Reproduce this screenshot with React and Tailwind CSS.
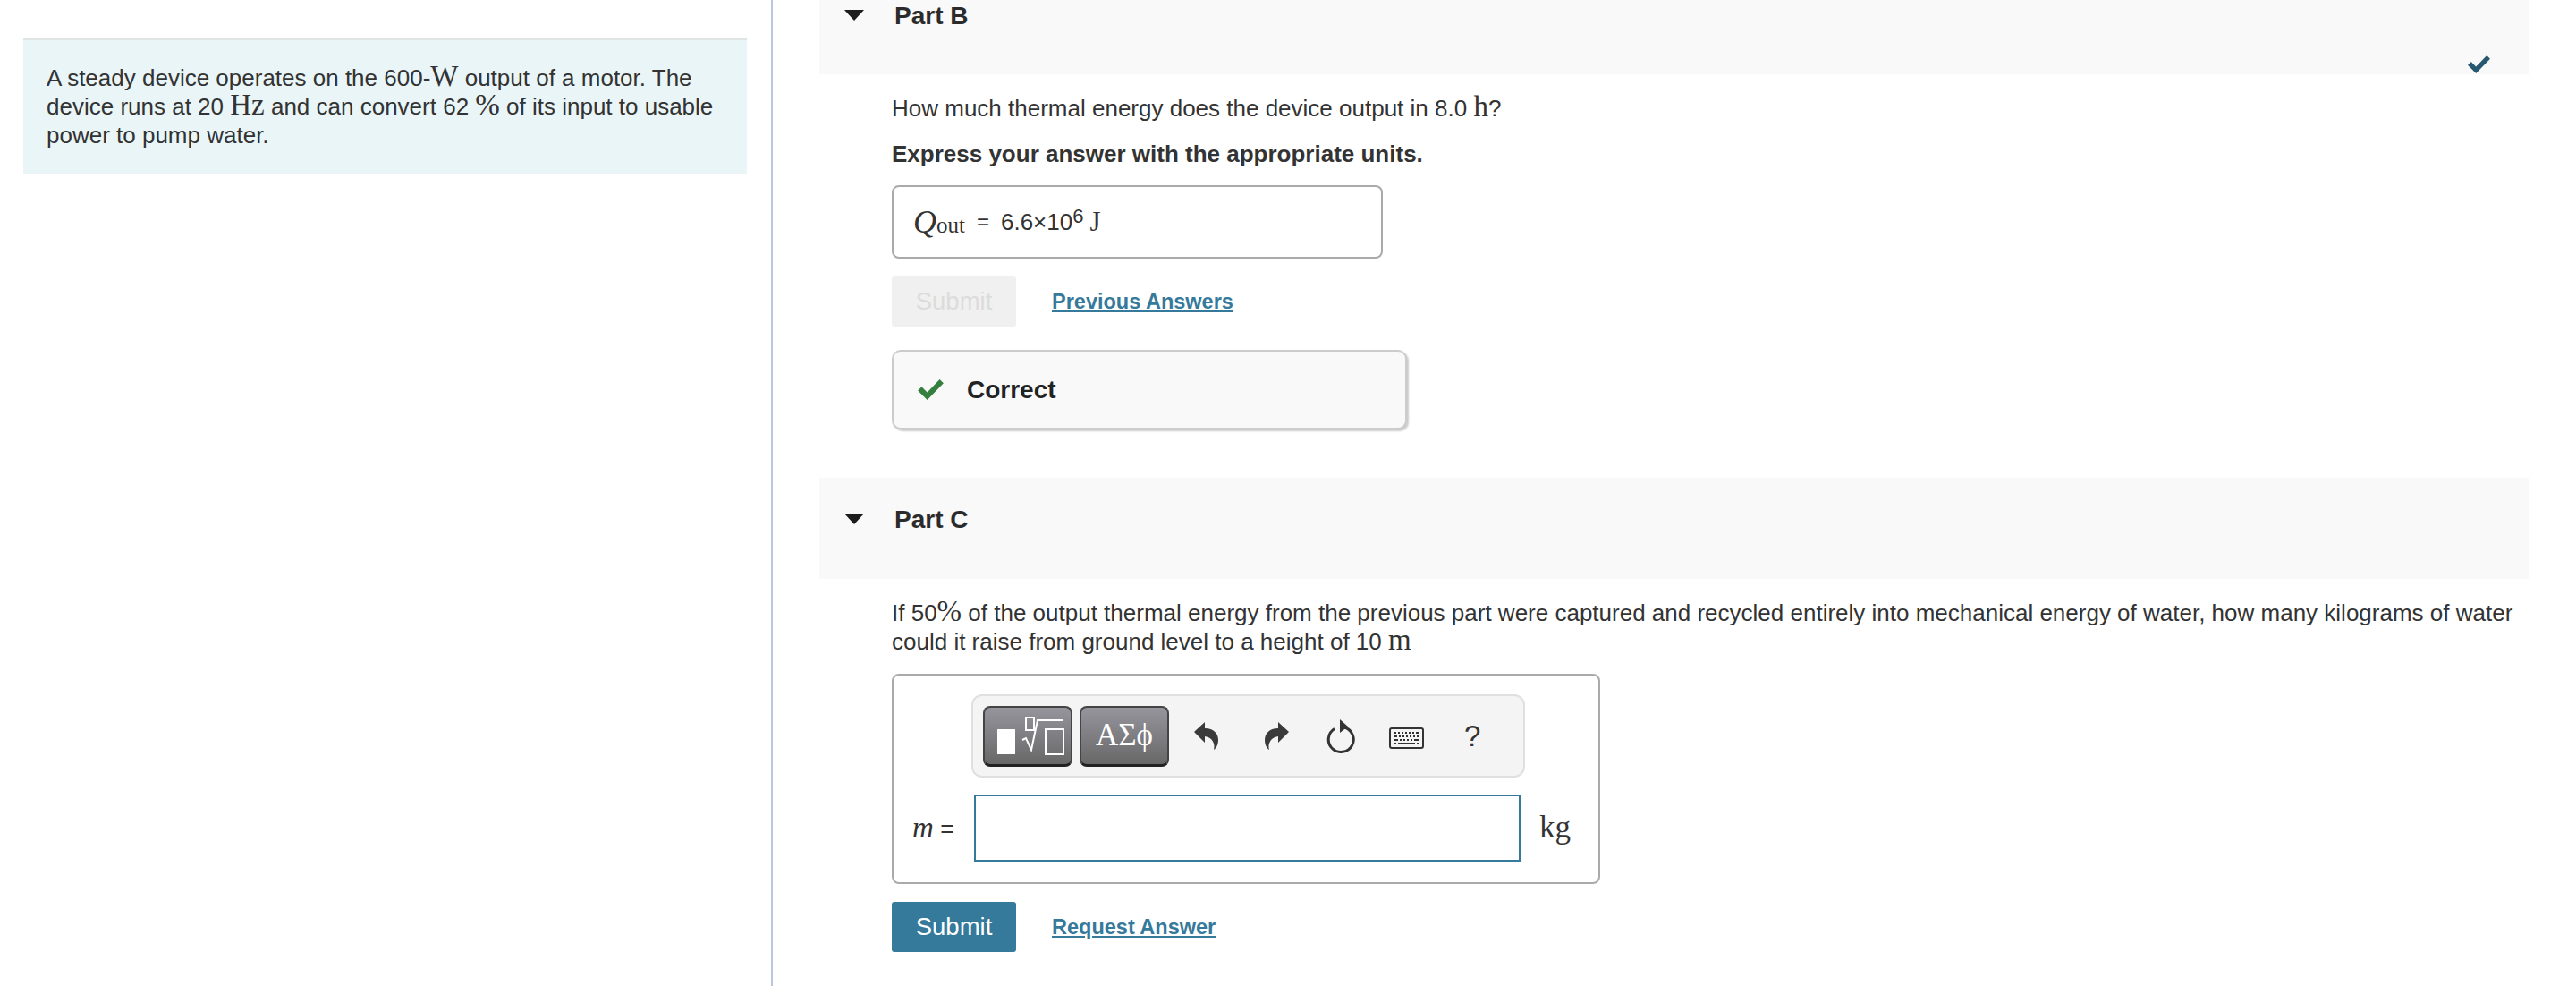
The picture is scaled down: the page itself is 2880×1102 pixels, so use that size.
// ─── Inline math in the serif face, a bit larger than the body text ───────────
const M = ({ children }) => (
  <span className="font-['Liberation_Serif',serif] text-[33px] leading-[0px]">{children}</span>
);

const CheckMark = ({ className }) => (
  <svg viewBox="0 0 30 24" className={className} fill="currentColor">
    <path d="M11 24 L0 13 L4.500 8.500 L11 15 L25.500 0 L30 4.500 Z" />
  </svg>
);

const Triangle = () => (
  <svg viewBox="0 0 22 12" className="w-[22px] h-[12px] shrink-0 text-[#1d1d1d]" fill="currentColor">
    <path d="M0 0 H22 L11 12 Z" />
  </svg>
);

const UndoIcon = ({ flip }) => (
  <svg viewBox="0 0 28 32" className={`w-[28px] h-[32px] text-[#3a3a3a] ${flip ? '-scale-x-100' : ''}`} fill="currentColor">
    <path d="M0 11 L12 0 V7 C22 7 27 13 27 20 C27 25 25 29 22 31 C24 24 20 17 12 16 V23 Z" />
  </svg>
);

const ResetIcon = () => (
  <svg viewBox="0 0 32 38" className="w-[32px] h-[38px] text-[#333]" fill="none" stroke="currentColor">
    <path d="M9 10.500 A14 14 0 1 0 20 9" strokeWidth="3" />
    <path d="M15 0 L24 8 L15 15 Z" fill="currentColor" stroke="none" />
  </svg>
);

const KeyboardIcon = () => (
  <svg viewBox="0 0 39 24" className="w-[39px] h-[24px] text-[#333]">
    <rect x="1" y="1" width="37" height="22" rx="2" fill="none" stroke="currentColor" strokeWidth="2" />
    <path
      d="M6 6 h2 M10 6 h2 M14 6 h2 M18 6 h2 M22 6 h2 M26 6 h2 M30 6 h3 M6 10 h3 M11 10 h2 M15 10 h2 M19 10 h2 M23 10 h2 M27 10 h2 M31 10 h2 M6 14 h4 M12 14 h2 M16 14 h2 M20 14 h2 M24 14 h2 M28 14 h5 M6 18 h2 M10 18 h19 M31 18 h2"
      stroke="currentColor"
      strokeWidth="2"
    />
  </svg>
);

const RadicalIcon = () => (
  <svg viewBox="0 0 96 63" className="w-[96px] h-[63px]" fill="none" stroke="#fff" strokeWidth="2">
    <rect x="14" y="24" width="20" height="28" fill="#fff" stroke="none" />
    <rect x="46" y="11" width="9" height="14" />
    <path d="M42 36 L46 34 L52 47 L59 14 H88" />
    <rect x="68" y="24" width="20" height="28" />
  </svg>
);

const PaletteButton = ({ children }) => (
  <div className="w-[100px] h-[68px] rounded-[8px] border-2 border-[#444] border-b-[3px] border-b-[#222] bg-gradient-to-b from-[#96959d] to-[#686868] flex items-center justify-center">
    {children}
  </div>
);

const PartHeader = ({ label, className }) => (
  <div className={`bg-[#f9f9f9] flex items-start pl-[28px] ${className}`}>
    <Triangle />
    <span className="ml-[34px] text-[28px] font-bold text-[#2b2b2b]">{label}</span>
  </div>
);

const LinkText = ({ children }) => (
  <a className="text-[23.500px] font-bold underline text-[#35799b]">{children}</a>
);

// ─── App ──────────────────────────────────────────────────────────────────────
export default function App() {
  return (
    <div className="h-screen overflow-hidden bg-white flex font-['Liberation_Sans',sans-serif] text-[26px] leading-[32px] text-[#333]">

      {/* Left column: problem statement */}
      <aside className="w-[864px] shrink-0 border-r-2 border-[#b9c9d9] pt-[43px] pl-[26px] pr-[27px]">
        <div className="bg-[#e9f5f7] border-t-2 border-[#dfe5e5] pt-[26px] pb-[27px] pl-[26px] pr-[24px]">
          A steady device operates on the 600-<M>W</M> output of a motor. The device runs at 20 <M>Hz</M> and can
          convert 62 <M>%</M> of its input to usable power to pump water.
        </div>
      </aside>

      {/* Right column: parts */}
      <main className="flex-1 pl-[52px] pr-[52px]">

        {/* Part B */}
        <PartHeader label="Part B" className="h-[83px] pt-[2px] [&>svg]:mt-[9px]" />
        <div className="relative pl-[81px]">
          <CheckMark className="absolute right-[44px] -top-[21px] w-[25px] h-[20px] text-[#26596f]" />
          <p className="pt-[22px]">How much thermal energy does the device output in 8.0 <M>h</M>?</p>
          <p className="mt-[19px] font-bold">Express your answer with the appropriate units.</p>
          <div className="mt-[19px] w-[549px] h-[82px] rounded-[8px] border-2 border-[#aaa] flex items-center pl-[22px] text-[24px]">
            <span className="font-['Liberation_Serif',serif] italic text-[36px]">Q</span>
            <span className="font-['Liberation_Serif',serif] text-[25px] mt-[8px]">out</span>
            <span className="ml-[13px]">=</span>
            <span className="ml-[13px] text-[26px]">6.6×10</span>
            <span className="text-[22px] -mt-[12px]">6</span>
            <span className="ml-[7px] font-['Liberation_Serif',serif] text-[31px]">J</span>
          </div>
          <div className="mt-[20px] flex items-center gap-[40px]">
            <div className="w-[139px] h-[56px] rounded-[3px] bg-[#f0f0f0] text-[27.500px] text-[#dcdcdc] flex items-center justify-center">Submit</div>
            <LinkText>Previous Answers</LinkText>
          </div>
          <div className="mt-[26px] w-[576px] h-[89px] rounded-[10px] border-2 border-[#ccc] bg-[#f9f9f9] shadow-[2px_2px_2px_#ccc] flex items-center pl-[27px]">
            <CheckMark className="w-[29px] h-[23px] text-[#35803f]" />
            <span className="ml-[26px] text-[28px] font-bold text-[#222]">Correct</span>
          </div>
        </div>

        {/* Part C */}
        <PartHeader label="Part C" className="mt-[54px] h-[113px] pt-[31px] [&>svg]:mt-[9px]" />
        <div className="pl-[81px]">
          <p className="pt-[22px]">
            If 50<M>%</M> of the output thermal energy from the previous part were captured and recycled entirely into
            mechanical energy of water, how many kilograms of water could it raise from ground level to a height of 10 <M>m</M>
          </p>
          <div className="mt-[20px] w-[792px] h-[235px] rounded-[8px] border-2 border-[#aaa] pl-[87px] pt-[21px]">
            <div className="w-[619px] h-[93px] rounded-[12px] border-2 border-[#e0e0e0] bg-[#f4f4f4] flex items-center pl-[11px]">
              <PaletteButton><RadicalIcon /></PaletteButton>
              <div className="ml-[8px]">
                <PaletteButton>
                  <span className="font-['Liberation_Serif',serif] text-[35px] text-white">ΑΣϕ</span>
                </PaletteButton>
              </div>
              <div className="ml-[28px]"><UndoIcon /></div>
              <div className="ml-[50px]"><UndoIcon flip /></div>
              <div className="ml-[42px]"><ResetIcon /></div>
              <div className="ml-[38px] mt-[4px]"><KeyboardIcon /></div>
              <span className="ml-[45px] text-[33px] text-[#333]">?</span>
            </div>
            <div className="relative mt-[19px] ml-[3px] w-[611px] h-[75px] border-2 border-[#35799b] bg-white">
              <span className="absolute -left-[71px] top-[19px] whitespace-nowrap text-[27px]">
                <span className="font-['Liberation_Serif',serif] italic text-[33px]">m</span> =
              </span>
              <span className="absolute -right-[58px] top-[19px] font-['Liberation_Serif',serif] text-[35px]">kg</span>
            </div>
          </div>
          <div className="mt-[20px] flex items-center gap-[40px]">
            <div className="w-[139px] h-[56px] rounded-[3px] bg-[#35799b] text-[27.500px] text-white flex items-center justify-center">Submit</div>
            <LinkText>Request Answer</LinkText>
          </div>
        </div>

      </main>
    </div>
  );
}
